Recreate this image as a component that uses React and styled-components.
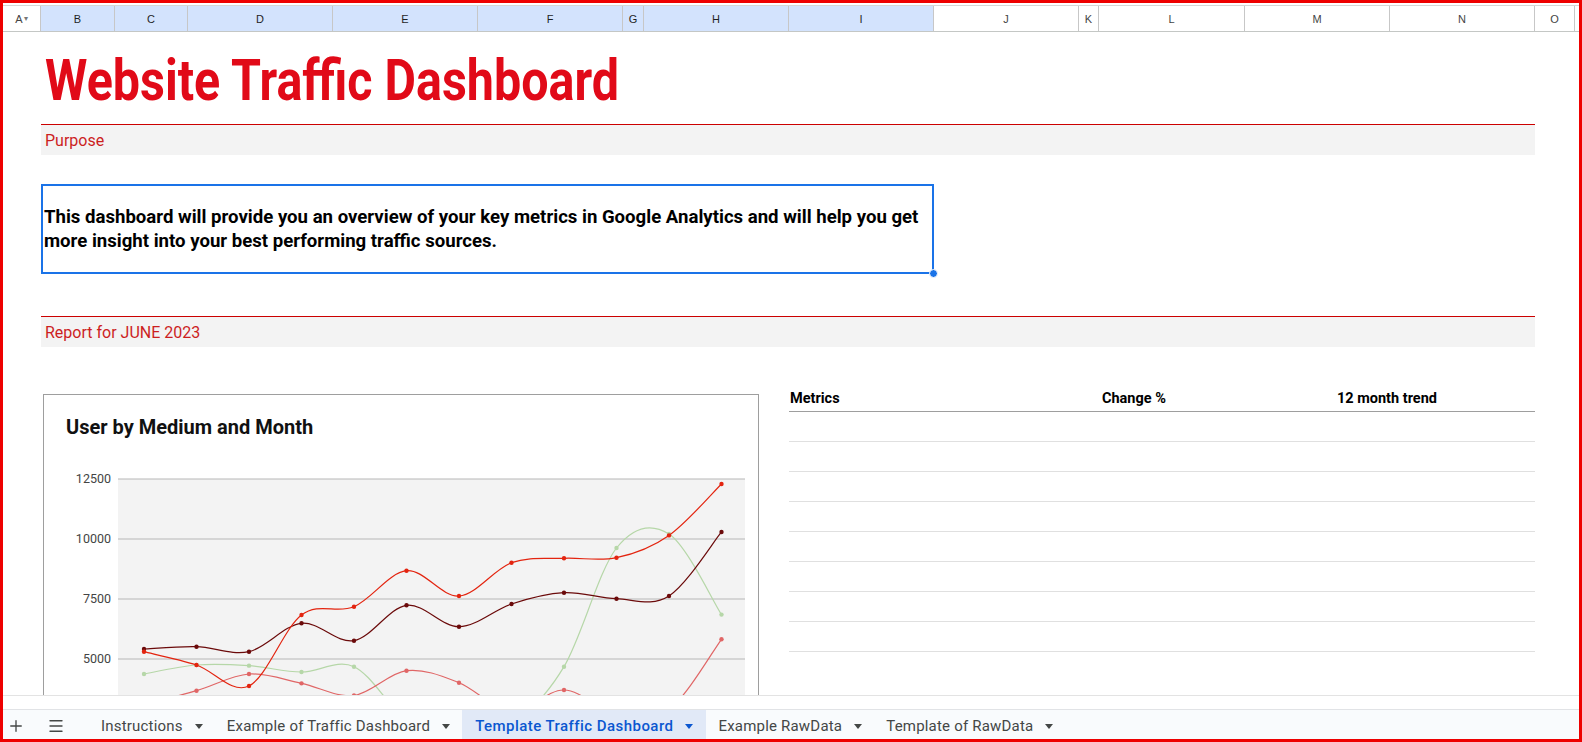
import React from 'react';
import styled, { createGlobalStyle } from 'styled-components';
import { Plus, Menu } from 'lucide-react';

// column widths of the sheet, A..O
const COLS = [38, 74, 73, 145, 145, 145, 21, 145, 145, 145, 20, 146, 145, 145, 40];
const LETTERS = 'ABCDEFGHIJKLMNO'.split('');
const SELECTED = 'BCDEFGHI';
const template = COLS.map(w => w + 'px').join(' ');

const GlobalStyle = createGlobalStyle`
  html, body { margin: 0; padding: 0; background: #fff; }
  body { font-family: Roboto, "Liberation Sans", Arial, sans-serif; }
`;

const Frame = styled.div`
  width: 1582px;
  height: 742px;
  box-sizing: border-box;
  border: 3px solid #ee0000;
  display: flex;
  flex-direction: column;
  overflow: hidden;
  background: #fff;
`;

const ColumnHeader = styled.div`
  display: grid;
  grid-template-columns: ${template};
  height: 25px;
  margin-top: 2px;
  border-top: 1px solid #d6d6d6;
  border-bottom: 1px solid #c4c7c5;
  flex-shrink: 0;
`;

const HeaderCell = styled.div`
  display: flex;
  align-items: center;
  justify-content: center;
  border-right: 1px solid #c7c7c7;
  background: ${p => (p.$sel ? '#d3e3fd' : '#fff')};
  color: ${p => (p.$sel ? '#1f1f1f' : '#444')};
  font-family: "Liberation Sans", Arial, sans-serif;
  font-size: 11px;
`;

const CornerCaret = styled.span`
  font-size: 8px;
  color: #777;
  margin-left: 1px;
`;

const Sheet = styled.div`
  flex: 1;
  min-height: 0;
  overflow: hidden;
  display: grid;
  grid-template-columns: ${template};
  align-content: start;
  align-items: start;
`;

const Title = styled.h1`
  grid-column: 2 / 15;
  margin: 14px 0 0;
  padding-left: 4px;
  height: 68px;
  font-size: 58px;
  line-height: 68px;
  font-weight: 700;
  color: #e10a18;
  white-space: nowrap;

  span {
    display: inline-block;
    transform: scaleX(0.835);
    transform-origin: left center;
  }
`;

const Band = styled.div`
  grid-column: 2 / 15;
  margin-top: ${p => p.$top}px;
  height: 30px;
  border-top: 1px solid #cc0000;
  background: #f3f3f3;
  display: flex;
  align-items: center;
  padding-left: 4px;
  font-size: 16px;
  color: #cc1f1f;
`;

const DescBox = styled.div`
  grid-column: 2 / 10;
  position: relative;
  margin-top: 29px;
  height: 90px;
  box-sizing: border-box;
  border: 2px solid #1a73e8;
  display: flex;
  align-items: center;
  padding-left: 1px;
  font-size: 18.6px;
  line-height: 24px;
  font-weight: 700;
  color: #000;
`;

const Handle = styled.span`
  position: absolute;
  right: -6px;
  bottom: -6px;
  width: 9px;
  height: 9px;
  box-sizing: border-box;
  border-radius: 50%;
  background: #1a73e8;
  border: 1px solid #fff;
`;

const ChartCard = styled.div`
  grid-column: 2 / 9;
  margin: 47px 30px 0 2px;
  height: 400px;
  border: 1px solid #9e9e9e;
  background: #fff;
`;

const ChartTitle = styled.div`
  padding: 20px 0 0 22px;
  font-size: 20px;
  line-height: 24px;
  font-weight: 700;
  color: #111;
`;

const MetricsTable = styled.div`
  grid-column: 9 / 15;
  margin-top: 39px;
`;

const TableRow = styled.div`
  display: grid;
  grid-template-columns: 312px 235px 1fr;
  height: ${p => (p.$head ? 26 : 30)}px;
  box-sizing: border-box;
  border-bottom: 1px solid ${p => (p.$head ? '#9e9e9e' : '#e0e0e0')};
  align-items: center;
  font-size: 14.5px;
  font-weight: 700;
  color: #000;
`;

const HeadCell = styled.div`
  padding-left: 1px;
`;

const ScrollStrip = styled.div`
  height: 14px;
  flex-shrink: 0;
  box-sizing: border-box;
  border-top: 1px solid #e3e3e3;
  background: #fff;
`;

const TabBar = styled.div`
  height: 30px;
  flex-shrink: 0;
  box-sizing: border-box;
  border-top: 1px solid #e1e3e6;
  background: #f9fbfd;
  display: flex;
  align-items: stretch;
  padding-left: 3px;
`;

const IconBtn = styled.div`
  width: 20px;
  margin-left: ${p => p.$gap || 0}px;
  padding-top: 3px;
  display: flex;
  align-items: center;
  justify-content: center;
  color: #444746;
`;

const Tabs = styled.div`
  display: flex;
  margin-left: 23px;
`;

const Tab = styled.div`
  display: flex;
  align-items: center;
  gap: 12px;
  padding: 3px ${p => (p.$active ? 13 : 12)}px 0;
  font-size: 15px;
  letter-spacing: ${p => (p.$active ? 0.45 : 0.2)}px;
  color: ${p => (p.$active ? '#0b57d0' : '#444746')};
  font-weight: ${p => (p.$active ? 500 : 400)};
  background: ${p => (p.$active ? '#e1e9f7' : 'transparent')};
  white-space: nowrap;
`;

const Caret = () => (
  <svg width="8" height="5" viewBox="0 0 8 5">
    <path d="M0 0 L8 0 L4 5 Z" fill="currentColor" />
  </svg>
);

// users per month, one list per medium
const SERIES = [
  { color: '#b6d7a8', values: [4375, 4750, 4722, 4458, 4680, 2500, 1900, 2300, 4680, 9625, 10208, 6850] },
  { color: '#e06666', values: [3100, 3680, 4375, 3986, 3480, 4513, 4013, 2800, 3708, 2700, 2900, 5821] },
  { color: '#6b0a0a', values: [5417, 5513, 5304, 6488, 5763, 7238, 6346, 7292, 7763, 7513, 7625, 10292] },
  { color: '#e3240f', values: [5304, 4750, 3875, 6833, 7179, 8679, 7625, 9013, 9196, 9221, 10150, 12292] },
];

const TICKS = [12500, 10000, 7500, 5000, 2500];
const yOf = v => 40 + (12500 - v) * 0.024;
const xOf = i => 100 + i * 52.5;

const smooth = pts => {
  let d = `M${pts[0][0]},${pts[0][1]}`;
  for (let i = 0; i < pts.length - 1; i++) {
    const p0 = pts[i - 1] || pts[i];
    const p1 = pts[i];
    const p2 = pts[i + 1];
    const p3 = pts[i + 2] || p2;
    const c1 = [p1[0] + (p2[0] - p0[0]) / 6, p1[1] + (p2[1] - p0[1]) / 6];
    const c2 = [p2[0] - (p3[0] - p1[0]) / 6, p2[1] - (p3[1] - p1[1]) / 6];
    d += ` C${c1} ${c2} ${p2}`;
  }
  return d;
};

function LineChart() {
  return (
    <svg width="712" height="340" style={{ display: 'block' }}>
      <rect x="74" y="40" width="627" height="300" fill="#f3f3f3" />
      {TICKS.map(t => (
        <g key={t}>
          <line x1="74" x2="701" y1={yOf(t)} y2={yOf(t)} stroke="#b7b7b7" strokeWidth="1" />
          <text x="67" y={yOf(t) + 4} textAnchor="end" fontSize="12.5" fill="#444" fontFamily="Roboto, sans-serif">{t}</text>
        </g>
      ))}
      {SERIES.map(s => {
        const pts = s.values.map((v, i) => [xOf(i), yOf(v)]);
        return (
          <g key={s.color}>
            <path d={smooth(pts)} fill="none" stroke={s.color} strokeWidth="1.2" />
            {pts.map((p, i) => (
              <circle key={i} cx={p[0]} cy={p[1]} r="2.2" fill={s.color} />
            ))}
          </g>
        );
      })}
    </svg>
  );
}

const TABS = ['Instructions', 'Example of Traffic Dashboard', 'Template Traffic Dashboard', 'Example RawData', 'Template of RawData'];

export default function App() {
  return (
    <>
      <GlobalStyle />
      <Frame>
        <ColumnHeader>
          {LETTERS.map(l => (
            <HeaderCell key={l} $sel={SELECTED.includes(l)}>
              {l}
              {l === 'A' && <CornerCaret>▾</CornerCaret>}
            </HeaderCell>
          ))}
        </ColumnHeader>

        <Sheet>
          <Title><span>Website Traffic Dashboard</span></Title>
          <Band $top={10}>Purpose</Band>
          <DescBox>
            <div>
              This dashboard will provide you an overview of your key metrics in Google Analytics and will help you get more insight into your best performing traffic sources.
            </div>
            <Handle />
          </DescBox>
          <Band $top={42}>Report for JUNE 2023</Band>

          <ChartCard>
            <ChartTitle>User by Medium and Month</ChartTitle>
            <LineChart />
          </ChartCard>

          <MetricsTable>
            <TableRow $head>
              <HeadCell>Metrics</HeadCell>
              <HeadCell>Change %</HeadCell>
              <HeadCell>12 month trend</HeadCell>
            </TableRow>
            {Array.from({ length: 8 }).map((_, i) => (
              <TableRow key={i} />
            ))}
          </MetricsTable>
        </Sheet>

        <ScrollStrip />
        <TabBar>
          <IconBtn><Plus size={18} strokeWidth={1.8} /></IconBtn>
          <IconBtn $gap={20}><Menu size={18} strokeWidth={1.8} /></IconBtn>
          <Tabs>
            {TABS.map((t, i) => (
              <Tab key={t} $active={i === 2}>
                {t}
                <Caret />
              </Tab>
            ))}
          </Tabs>
        </TabBar>
      </Frame>
    </>
  );
}
